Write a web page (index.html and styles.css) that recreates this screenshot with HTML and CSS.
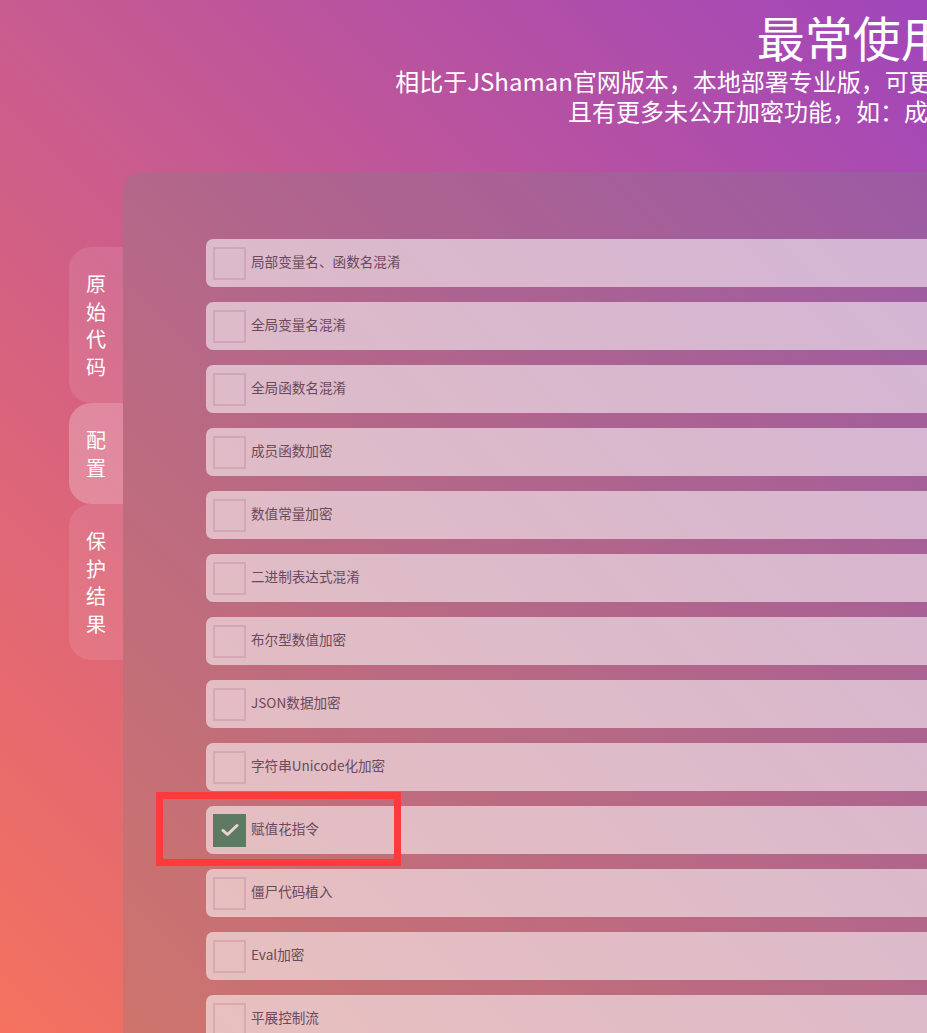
FILE: index.html
```html
<!DOCTYPE html>
<html>
<head>
    <title>JShaman 本地部署专业版</title>
    <link rel="stylesheet" href="styles.css">
</head>
<body>
    <div class="page">
        <div class="hero">
            <h1>最常使用的JS加密工具</h1>
            <p>相比于JShaman官网版本，本地部署专业版，可更加安全地离线使用，加密速度更快、不限代码大小与加密次数，<br>且有更多未公开加密功能，如：成员函数加密、赋值花指令、僵尸代码植入等功能</p>
        </div>

        <div class="main">
            <div class="tabs">
                <div class="tab">原<br>始<br>代<br>码</div>
                <div class="tab active">配<br>置</div>
                <div class="tab">保<br>护<br>结<br>果</div>
            </div>

            <div class="panel">
                <div class="options" id="options"></div>
            </div>
        </div>
    </div>

    <script>
        const options = [
            "局部变量名、函数名混淆",
            "全局变量名混淆",
            "全局函数名混淆",
            "成员函数加密",
            "数值常量加密",
            "二进制表达式混淆",
            "布尔型数值加密",
            "JSON数据加密",
            "字符串Unicode化加密",
            "赋值花指令",
            "僵尸代码植入",
            "Eval加密",
            "平展控制流"
        ];

        const list = document.getElementById("options");
        options.forEach(name => {
            const row = document.createElement("label");
            row.className = "option";
            const checked = name === "赋值花指令";
            row.innerHTML = `
                <span class="box ${checked ? "checked" : ""}">
                    ${checked ? '<svg width="18" height="14" viewBox="0 0 18 14"><path d="M2 7.5 L6.5 11.5 L16 2.5" fill="none" stroke="#ecd2d2" stroke-width="3" stroke-linecap="round" stroke-linejoin="round"/></svg>' : ""}
                </span>
                <span class="name">${name}</span>
                ${checked ? '<span class="mark"></span>' : ""}
            `;
            list.appendChild(row);
        });
    </script>
</body>
</html>
```

FILE: styles.css
```css
html { min-height: 100%; background: linear-gradient(45deg, #f5725e 0%, #a046bb 100%); }
body { margin: 0; overflow: hidden; height: 1033px; font-family: "Noto Sans CJK SC", "Noto Sans", sans-serif; }

.page { width: 2000px; }

.hero { text-align: center; color: #fff; }
.hero h1 { margin: 6px 0 0; font-size: 48px; font-weight: normal; line-height: 60px; }
.hero p { margin: 0; font-size: 24px; line-height: 30px; }

.main { display: flex; margin: 46px 0 0 69px; }

.tabs { width: 54px; padding-top: 75px; display: flex; flex-direction: column; }
.tab {
    color: #fff;
    font-size: 20px;
    line-height: 27.5px;
    text-align: center;
    padding: 23px 0;
    background: rgba(255, 255, 255, 0.1);
    border-radius: 22px 0 0 22px;
}
.tab.active { background: rgba(255, 255, 255, 0.25); }

.panel {
    width: 1500px;
    height: 1000px;
    padding: 67px 0 0 83px;
    background: rgba(128, 128, 128, 0.3);
    border-top-left-radius: 20px;
}

.options { display: flex; flex-direction: column; gap: 15px; }

.option {
    position: relative;
    display: flex;
    align-items: center;
    gap: 5px;
    height: 48px;
    padding-left: 7px;
    background: rgba(255, 255, 255, 0.55);
    border-radius: 7px;
    cursor: pointer;
}

.box {
    width: 33px;
    height: 33px;
    box-sizing: border-box;
    border: 2px solid rgba(190, 130, 155, 0.35);
    display: flex;
    align-items: center;
    justify-content: center;
}
.box.checked { background: #5f7a62; border-color: #5f7a62; }

.name { font-size: 13.6px; line-height: 1; color: #6a4a5c; margin-top: -3px; }

/* annotation frame around the checked option */
.mark {
    position: absolute;
    left: -50px;
    top: -14px;
    width: 245px;
    height: 74px;
    box-sizing: border-box;
    border: 7px solid #fe3a3a;
    pointer-events: none;
}
```
